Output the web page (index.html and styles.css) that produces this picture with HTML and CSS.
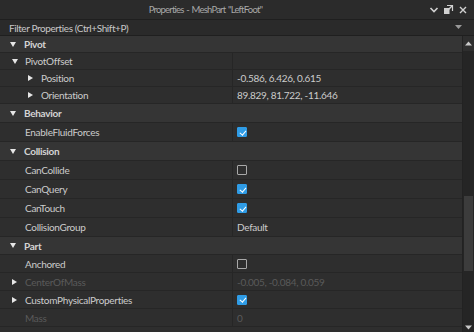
FILE: index.html
```html
<!DOCTYPE html>
<html>
  <head>
    <meta name='viewport' content='width=device-width, initial-scale=1'>
    <title>Properties</title>
    <link rel="stylesheet" href="styles.css">
  </head>
<body>
<div class='panel'>
  <div class='titlebar'>
    <span class='title'>Properties - MeshPart "LeftFoot"</span>
    <div class='winbtns'>
      <svg width='10' height='10' viewBox='0 0 10 10'><polyline points='1.5,3 5,6.5 8.5,3' fill='none' stroke='#d0d0d0' stroke-width='1.6'/></svg>
      <svg width='11' height='11' viewBox='0 0 11 11'><path d='M4 1.5H9.5V7' fill='none' stroke='#d0d0d0' stroke-width='1.2'/><rect x='1' y='4' width='5.5' height='6' fill='#d0d0d0'/><line x1='3.5' y1='7.5' x2='9.5' y2='1.5' stroke='#d0d0d0' stroke-width='1.4'/></svg>
      <svg width='10' height='10' viewBox='0 0 10 10'><path d='M2 2L8 8M8 2L2 8' stroke='#d0d0d0' stroke-width='1.4'/></svg>
    </div>
  </div>
  <div class='filter'>
    <span>Filter Properties (Ctrl+Shift+P)</span>
    <svg class='filter-arrow' width='7' height='5' viewBox='0 0 7 5'><polygon points='0,0 7,0 3.5,4' fill='#9a9a9a'/></svg>
  </div>
  <div class='body'>
    <div class='list'>
      <div class='row head tight'><span class='tri down'></span>Pivot</div>
      <div class='row tight'><div class='name'><span class='tri down'></span>PivotOffset</div><div class='value'></div></div>
      <div class='row tight'><div class='name sub'><span class='tri right'></span>Position</div><div class='value'>-0.586, 6.426, 0.615</div></div>
      <div class='row tight'><div class='name sub'><span class='tri right'></span>Orientation</div><div class='value'>89.829, 81.722, -11.646</div></div>

      <div class='row head'><span class='tri down'></span>Behavior</div>
      <div class='row'><div class='name'>EnableFluidForces</div><div class='value'><span class='check on'></span></div></div>

      <div class='row head'><span class='tri down'></span>Collision</div>
      <div class='row'><div class='name'>CanCollide</div><div class='value'><span class='check'></span></div></div>
      <div class='row'><div class='name'>CanQuery</div><div class='value'><span class='check on'></span></div></div>
      <div class='row'><div class='name'>CanTouch</div><div class='value'><span class='check on'></span></div></div>
      <div class='row'><div class='name'>CollisionGroup</div><div class='value'>Default</div></div>

      <div class='row head low'><span class='tri down'></span>Part</div>
      <div class='row low'><div class='name'>Anchored</div><div class='value'><span class='check'></span></div></div>
      <div class='row low dim'><div class='name'><span class='tri right'></span>CenterOfMass</div><div class='value'>-0.005, -0.084, 0.059</div></div>
      <div class='row low'><div class='name'><span class='tri right'></span>CustomPhysicalProperties</div><div class='value'><span class='check on'></span></div></div>
      <div class='row low dim'><div class='name'>Mass</div><div class='value'>0</div></div>
    </div>
    <div class='scrollbar'>
      <div class='sb-btn'><svg width='7' height='5' viewBox='0 0 7 5'><polygon points='0,4.5 7,4.5 3.5,0.5' fill='#c8c8c8'/></svg></div>
      <div class='track'><div class='thumb'></div></div>
      <div class='sb-btn bottom'><svg width='7' height='5' viewBox='0 0 7 5'><polygon points='0,0.5 7,0.5 3.5,4.5' fill='#c8c8c8'/></svg></div>
    </div>
  </div>
</div>
</body>
</html>
```

FILE: styles.css
```css
* {box-sizing: border-box;}
body {margin: 0; background: #242424; font-family: Lato, "Open Sans", sans-serif; font-size: 10px; letter-spacing: -0.3px; color: #cccccc;}

.panel {width: 474px; height: 332px; display: flex; flex-direction: column; overflow: hidden; background: #2e2e2e;}

.titlebar {height: 20px; background: #2b2b2b; display: flex; align-items: center; border-bottom: 1px solid #1f1f1f;}
.title {flex: 1; text-align: center; padding-right: 18px; color: #a8a8a8; font-size: 9.5px; letter-spacing: -0.8px; word-spacing: 1px;}
.winbtns {display: flex; align-items: center; gap: 4px; padding-right: 6px;}

.filter {height: 16px; background: #2a2a2a; display: flex; align-items: center; justify-content: space-between; padding: 0 12px 0 9px; color: #c8c8c8; letter-spacing: -0.4px; border-bottom: 1px solid #1f1f1f;}

.body {flex: 1; display: flex; min-height: 0;}
.list {flex: 1; display: flex; flex-direction: column;}

.row {height: 19px; display: flex; align-items: stretch; border-bottom: 1px solid #262626; background: #2e2e2e;}
.row.tight {height: 17px;}
.row.low {height: 18px;}
.row.head {background: #353535; font-weight: bold; align-items: center; padding-left: 10px; color: #d4d4d4;}
.row.head .tri {margin-right: 8px;}

.name {width: 233px; display: flex; align-items: center; padding-left: 25px; position: relative; border-right: 1px solid #262626;}
.name.sub {padding-left: 41px;}
.value {flex: 1; display: flex; align-items: center; padding-left: 4px;}
.dim {color: #5a5a5a;}

.tri {display: inline-block; width: 0; height: 0;}
.tri.down {border-left: 3.5px solid transparent; border-right: 3.5px solid transparent; border-top: 5px solid #e6e6e6;}
.tri.right {border-top: 3.5px solid transparent; border-bottom: 3.5px solid transparent; border-left: 5px solid #e6e6e6;}
.name .tri {position: absolute; left: 12px;}
.name.sub .tri {left: 28px;}

.check {width: 10px; height: 10px; border: 1px solid #a8a8a8; border-radius: 1px; display: inline-block; position: relative;}
.check.on {background: #2f9ce6; border-color: #2f9ce6;}
.check.on:after {content: ''; position: absolute; left: 2.5px; top: 0.5px; width: 2.5px; height: 5px; border: solid #ffffff; border-width: 0 1.5px 1.5px 0; transform: rotate(40deg);}

.scrollbar {width: 12px; display: flex; flex-direction: column; background: #252525; border-left: 1px solid #222;}
.sb-btn {height: 15px; display: flex; align-items: center; justify-content: center; background: #2e2e2e;}
.sb-btn.bottom {height: 10px; background: #252525;}
.track {flex: 1; position: relative;}
.thumb {position: absolute; left: 1px; right: 1px; top: 145px; height: 75px; background: #3c3c3c;}
```
